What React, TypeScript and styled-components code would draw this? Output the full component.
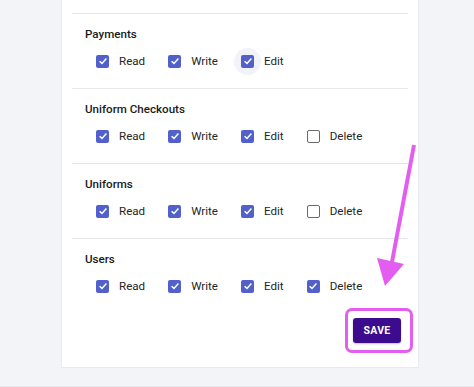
import React from "react";
import styled, { createGlobalStyle } from "styled-components";

const GlobalStyle = createGlobalStyle`
  html, body {
    margin: 0;
    padding: 0;
    background: #f3f4f8;
    font-family: Roboto, "Liberation Sans", sans-serif;
    color: #222;
  }
`;

const Page = styled.div`
  position: relative;
  width: 474px;
  height: 387px;
  overflow: hidden;
  border-bottom: 1px solid #e7e8ec;
  box-sizing: border-box;
`;

const Card = styled.div`
  margin-left: 62px;
  width: 356px;
  box-sizing: border-box;
  background: #fff;
  padding: 13px 10px 14px;
  box-shadow: 0 0 0 1px #e9eaef;
`;

const Section = styled.div`
  border-top: 1px solid #e6e6e9;
  padding: 12px 0 15px 13px;
`;

const Title = styled.div`
  font-size: 11.6px;
  font-weight: 500;
  line-height: 16px;
  margin-bottom: 7px;
  color: #1a1a1a;
`;

const Row = styled.div`
  display: flex;
  align-items: center;
  height: 24px;
  padding-left: 11px;
`;

const Item = styled.label`
  display: flex;
  align-items: center;
  margin-right: 23px;
  font-size: 11.6px;
  color: #262626;
`;

const Ripple = styled.span<{ $focus?: boolean }>`
  display: grid;
  place-items: center;
  width: 27px;
  height: 27px;
  margin: -7px 3px -7px -7px;
  border-radius: 50%;
  background: ${({ $focus }) => ($focus ? "#f2f3f9" : "transparent")};
`;

const Box = styled.span<{ $checked: boolean }>`
  width: 13px;
  height: 13px;
  box-sizing: border-box;
  border-radius: 2px;
  display: grid;
  place-items: center;
  background: ${({ $checked }) => ($checked ? "#5260cc" : "#fff")};
  border: ${({ $checked }) => ($checked ? "none" : "1.5px solid #6a6a6a")};
`;

const Check = styled.svg`
  width: 10px;
  height: 10px;
`;

const Footer = styled.div`
  display: flex;
  justify-content: flex-end;
  margin-top: -5px;
  margin-right: -5px;
`;

const Highlight = styled.div`
  border: 3px solid #e35ef0;
  border-radius: 7px;
  padding: 7px 9px 7px 5px;
`;

const SaveButton = styled.button`
  width: 48px;
  height: 25px;
  border: none;
  border-radius: 3px;
  background: #3d0b8e;
  color: #fff;
  font-family: Roboto, "Liberation Sans", sans-serif;
  font-weight: 700;
  font-size: 10.5px;
  letter-spacing: 0.3px;
  box-shadow: 0 1px 2px rgba(0, 0, 0, 0.25);
  cursor: pointer;
`;

const Arrow = styled.svg`
  position: absolute;
  left: 0;
  top: 0;
  pointer-events: none;
`;

type Perm = { name: string; checked: boolean; focus?: boolean };

const sections: { title: string; perms: Perm[] }[] = [
  {
    title: "Payments",
    perms: [
      { name: "Read", checked: true },
      { name: "Write", checked: true },
      { name: "Edit", checked: true, focus: true },
    ],
  },
  {
    title: "Uniform Checkouts",
    perms: [
      { name: "Read", checked: true },
      { name: "Write", checked: true },
      { name: "Edit", checked: true },
      { name: "Delete", checked: false },
    ],
  },
  {
    title: "Uniforms",
    perms: [
      { name: "Read", checked: true },
      { name: "Write", checked: true },
      { name: "Edit", checked: true },
      { name: "Delete", checked: false },
    ],
  },
  {
    title: "Users",
    perms: [
      { name: "Read", checked: true },
      { name: "Write", checked: true },
      { name: "Edit", checked: true },
      { name: "Delete", checked: true },
    ],
  },
];

const App = () => {
  return (
    <Page>
      <GlobalStyle />
      <Card>
        {sections.map((s) => (
          <Section key={s.title}>
            <Title>{s.title}</Title>
            <Row>
              {s.perms.map((p) => (
                <Item key={p.name}>
                  <Ripple $focus={p.focus}>
                    <Box $checked={p.checked}>
                      {p.checked && (
                        <Check viewBox="0 0 10 10">
                          <path
                            d="M1.6 5.2 L4 7.4 L8.4 2.6"
                            fill="none"
                            stroke="#fff"
                            strokeWidth="1.5"
                          />
                        </Check>
                      )}
                    </Box>
                  </Ripple>
                  {p.name}
                </Item>
              ))}
            </Row>
          </Section>
        ))}
        <Footer>
          <Highlight>
            <SaveButton>SAVE</SaveButton>
          </Highlight>
        </Footer>
      </Card>
      <Arrow width="474" height="387">
        <line
          x1="414"
          y1="145"
          x2="392"
          y2="262"
          stroke="#e35ef0"
          strokeWidth="4"
        />
        <polygon points="377,258 404,264 385,286" fill="#e35ef0" />
      </Arrow>
    </Page>
  );
};

export default App;
